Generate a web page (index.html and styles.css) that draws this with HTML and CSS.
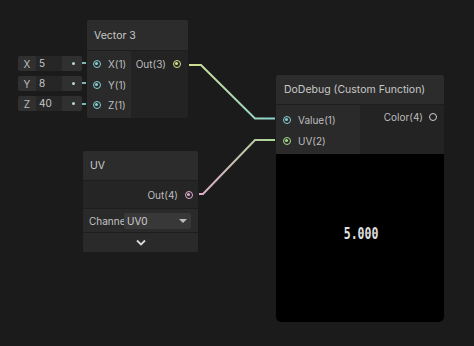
FILE: index.html
```html
<!DOCTYPE html>
<html lang="en">
<head>
  <meta charset="UTF-8">
  <title>Shader Graph</title>
  <link rel="stylesheet" href="styles.css">
</head>
<body>
  <div class="graph">
    <svg class="wires" width="474" height="346">
      <defs>
        <linearGradient id="g1" x1="180" y1="0" x2="283" y2="0" gradientUnits="userSpaceOnUse">
          <stop offset="0" stop-color="#d8e08a"/>
          <stop offset="1" stop-color="#84d0d4"/>
        </linearGradient>
        <linearGradient id="g2" x1="192" y1="0" x2="283" y2="0" gradientUnits="userSpaceOnUse">
          <stop offset="0" stop-color="#e0a8d0"/>
          <stop offset="1" stop-color="#a6dc8c"/>
        </linearGradient>
      </defs>
      <path d="M180 65 H201 L255 118.5 H283" fill="none" stroke="url(#g1)" stroke-width="2"/>
      <path d="M192 194 H203 L255 140 H283" fill="none" stroke="url(#g2)" stroke-width="2"/>
      <path d="M80 63 H93 M80 83 H93 M80 104 H93" stroke="#7ab8b4" stroke-width="2"/>
    </svg>

    <div class="fields">
      <div class="field"><span class="axis">X</span><span class="value">5</span><i class="dot"></i></div>
      <div class="field"><span class="axis">Y</span><span class="value">8</span><i class="dot"></i></div>
      <div class="field"><span class="axis">Z</span><span class="value">40</span><i class="dot"></i></div>
    </div>

    <div class="node vec3">
      <div class="title">Vector 3</div>
      <div class="body">
        <div class="inputs">
          <div class="port in"><i class="ring cyan"></i>X(1)</div>
          <div class="port in"><i class="ring cyan"></i>Y(1)</div>
          <div class="port in"><i class="ring cyan"></i>Z(1)</div>
        </div>
        <div class="outputs">
          <div class="port out">Out(3)<i class="ring yellow"></i></div>
        </div>
      </div>
    </div>

    <div class="node uv">
      <div class="title">UV</div>
      <div class="uv-out">
        <div class="port out">Out(4)<i class="ring pink"></i></div>
      </div>
      <div class="uv-channel">
        <span class="ch-label">Channe</span>
        <div class="dropdown">UV0<span class="caret"></span></div>
      </div>
      <div class="expand">
        <svg width="10" height="7" viewBox="0 0 10 7"><path d="M1 1.5 L5 5.5 L9 1.5" fill="none" stroke="#d8d8d8" stroke-width="1.8"/></svg>
      </div>
    </div>

    <div class="node debug">
      <div class="title">DoDebug (Custom Function)</div>
      <div class="body">
        <div class="inputs">
          <div class="port in"><i class="ring cyan"></i>Value(1)</div>
          <div class="port in"><i class="ring green"></i>UV(2)</div>
        </div>
        <div class="outputs">
          <div class="port out">Color(4)<i class="ring white"></i></div>
        </div>
      </div>
      <div class="preview"><span class="readout">5.000</span></div>
    </div>
  </div>
</body>
</html>
```

FILE: styles.css
```css
* { box-sizing: border-box; margin: 0; padding: 0; }
body { background: #1b1b1b; font-family: Inter, "Noto Sans", sans-serif; color: #c4c4c4; }
.graph { position: relative; width: 474px; height: 346px; background: #1b1b1b; overflow: hidden; }
.wires { position: absolute; left: 0; top: 0; }

/* nodes sit on a free canvas */
.node { position: absolute; background: #232323; border: 1px solid #1a1a1a; border-radius: 3px; overflow: hidden; }
.title { height: 31px; padding: 0 7px; display: flex; align-items: center; background: #2c2c2c; font-size: 10.5px; color: #c8c8c8; white-space: nowrap; border-bottom: 1px solid #1e1e1e; }
.body { display: flex; }
.inputs { background: #2a2a2a; padding-top: 3px; }
.outputs { flex: 1; background: #232323; padding-top: 3px; }
.port { display: flex; align-items: center; height: 20.5px; font-size: 10px; color: #bdbdbd; }
.port.in { padding-left: 6px; gap: 6px; }
.port.out { justify-content: flex-end; padding-right: 7px; gap: 7px; }

.ring { display: block; width: 8px; height: 8px; border-radius: 50%; border: 1.5px solid; position: relative; }
.ring::after { content: ""; position: absolute; left: 1px; top: 1px; width: 3px; height: 3px; border-radius: 50%; background: currentColor; }
.ring.cyan { color: #84cfd2; }
.ring.yellow { color: #d8e08a; }
.ring.pink { color: #e0a8d0; }
.ring.green { color: #a6dc8c; }
.ring.white { color: #d0d0d0; }
.ring.white::after { display: none; }

.vec3 { left: 86px; top: 19px; width: 103px; height: 100px; }
.vec3 .body { height: 68px; }
.vec3 .inputs { width: 44px; }
.vec3 .port.in { padding-left: 6px; gap: 7px; }

.fields { position: absolute; left: 18px; top: 56px; display: flex; flex-direction: column; gap: 5px; }
.field { position: relative; display: flex; align-items: center; width: 64px; height: 15px; background: #303030; border-radius: 2px; font-size: 10px; }
.axis { width: 18px; text-align: center; color: #bcbcbc; }
.value { width: 26px; height: 15px; line-height: 15px; padding-left: 3px; background: #262626; color: #c8c8c8; }
.dot { position: absolute; left: 54px; top: 6px; width: 3px; height: 3px; border-radius: 50%; background: #b8d8d4; }

.debug { left: 275px; top: 74px; width: 170px; height: 249px; border-radius: 3px 3px 5px 5px; }
.debug .title { height: 30px; padding-left: 8px; }
.debug .body { height: 49px; }
.debug .inputs { width: 84px; padding-top: 4px; }
.debug .port.in { padding-left: 7px; gap: 7px; height: 21px; }
.debug .outputs { padding-top: 2px; }
.debug .port.out { padding-right: 7px; gap: 6px; }
.preview { height: 168px; background: #000; border-radius: 0 0 5px 5px; display: flex; align-items: center; justify-content: center; }
.readout { font-family: "DejaVu Sans Mono", monospace; font-weight: bold; font-size: 16px; color: #e0e0e0; transform: scaleX(0.72); margin-left: 2px; margin-top: -10px; }

.uv { left: 82px; top: 150px; width: 117px; height: 103px; }
.uv .title { height: 30px; }
.uv-out { height: 28px; background: #252525; padding-top: 4px; border-bottom: 1px solid #1e1e1e; }
.uv-out .port.out { padding-right: 5px; }
.uv-channel { height: 24px; display: flex; align-items: center; padding: 0 7px 0 6px; background: #2a2a2a; border-bottom: 1px solid #1e1e1e; font-size: 10px; }
.ch-label { width: 35px; overflow: hidden; white-space: nowrap; color: #c4c4c4; }
.dropdown { flex: 1; height: 16px; display: flex; align-items: center; justify-content: space-between; padding: 0 4px 0 3px; background: #383838; border-radius: 2px; color: #d0d0d0; }
.caret { width: 0; height: 0; border-left: 4px solid transparent; border-right: 4px solid transparent; border-top: 4px solid #bcbcbc; }
.expand { height: 19px; display: flex; align-items: center; justify-content: center; background: #2a2a2a; }
```
